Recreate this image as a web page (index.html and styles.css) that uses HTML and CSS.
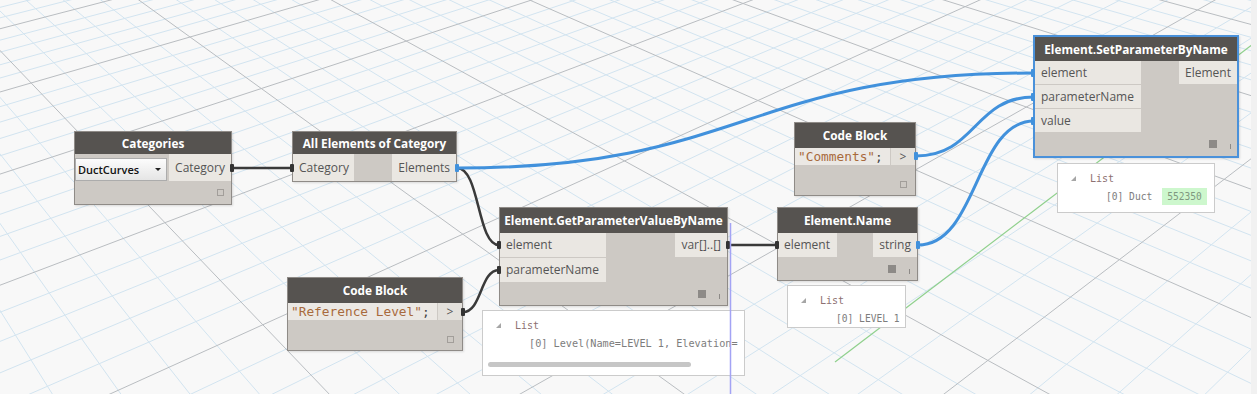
FILE: index.html
```html
<!DOCTYPE html>
<html lang="en">
<head>
    <meta charset="UTF-8">
    <meta name="viewport" content="width=device-width, initial-scale=1.0">
    <title>Dynamo - Set Comments</title>
    <link rel="stylesheet" href="styles.css">
</head>
<body>
    <div id="workspace">
        <svg id="grid" width="1257" height="394">
            <g id="minor-lines"></g>
            <g id="major-lines"></g>
            <line class="axis-y" x1="835" y1="362" x2="1257" y2="41"></line>
        </svg>

        <!-- Categories -->
        <div class="node n-categories">
            <div class="node-title short">Categories</div>
            <div class="node-body tall">
                <div class="dropdown"><span>DuctCurves</span><span class="caret"></span></div>
                <div class="outputs"><div class="port">Category</div></div>
            </div>
            <div class="node-foot"><span class="preview-off"></span></div>
        </div>

        <!-- All Elements of Category -->
        <div class="node n-all-elements">
            <div class="node-title short">All Elements of Category</div>
            <div class="node-body tall">
                <div class="inputs"><div class="port">Category</div></div>
                <div class="outputs"><div class="port">Elements</div></div>
            </div>
        </div>

        <!-- Code Block: Comments -->
        <div class="node n-code-comments">
            <div class="node-title">Code Block</div>
            <div class="code-row">
                <div class="code"><span class="str">"Comments"</span>;</div>
                <div class="code-out">&gt;</div>
            </div>
            <div class="node-foot code-foot"><span class="preview-off"></span></div>
        </div>

        <!-- Code Block: Reference Level -->
        <div class="node n-code-level">
            <div class="node-title">Code Block</div>
            <div class="code-row">
                <div class="code"><span class="str">"Reference Level"</span>;</div>
                <div class="code-out">&gt;</div>
            </div>
            <div class="node-foot code-foot"><span class="preview-off"></span></div>
        </div>

        <!-- Element.GetParameterValueByName -->
        <div class="node n-get-param">
            <div class="node-title">Element.GetParameterValueByName</div>
            <div class="node-body">
                <div class="inputs">
                    <div class="port">element</div>
                    <div class="port">parameterName</div>
                </div>
                <div class="outputs"><div class="port">var[]..[]</div></div>
            </div>
            <div class="node-foot"><span class="preview-on"></span><span class="lacing"></span></div>
        </div>
        <div class="preview p-get-param">
            <div class="preview-head"><span class="tri"></span><span class="list-label">List</span></div>
            <div class="preview-item">[0] Level(Name=LEVEL 1, Elevation=</div>
            <div class="scrollbar"></div>
        </div>

        <!-- Element.Name -->
        <div class="node n-element-name">
            <div class="node-title">Element.Name</div>
            <div class="node-body">
                <div class="inputs"><div class="port">element</div></div>
                <div class="outputs"><div class="port">string</div></div>
            </div>
            <div class="node-foot"><span class="preview-on"></span><span class="lacing"></span></div>
        </div>
        <div class="preview p-element-name">
            <div class="preview-head"><span class="tri"></span><span class="list-label">List</span></div>
            <div class="preview-item">[0] LEVEL 1</div>
        </div>

        <!-- Element.SetParameterByName (selected) -->
        <div class="node selected n-set-param">
            <div class="node-title">Element.SetParameterByName</div>
            <div class="node-body">
                <div class="inputs">
                    <div class="port">element</div>
                    <div class="port">parameterName</div>
                    <div class="port">value</div>
                </div>
                <div class="outputs"><div class="port">Element</div></div>
            </div>
            <div class="node-foot"><span class="preview-on"></span><span class="lacing"></span></div>
        </div>
        <div class="preview p-set-param">
            <div class="preview-head"><span class="tri"></span><span class="list-label">List</span></div>
            <div class="preview-item">[0] Duct<span class="value-new">552350</span></div>
        </div>

        <svg id="wires" width="1257" height="394">
            <path class="wire" d="M232,168 L292,168"></path>
            <path class="wire" d="M457,168 C480,168 477,245 499,245"></path>
            <path class="wire" d="M463,312 C482,312 480,270 499,270"></path>
            <path class="wire" d="M728,245 L777,245"></path>
            <path class="wire active" d="M457,168 C745,168 746,73 1034,73"></path>
            <path class="wire active" d="M916,156 C976,156 974,97 1034,97"></path>
            <path class="wire active" d="M918,245 C978,245 975,121 1034,121"></path>

            <rect class="pin" x="230" y="164" width="4" height="8" rx="1"></rect>
            <rect class="pin" x="290" y="164" width="4" height="8" rx="1"></rect>
            <rect class="pin" x="497" y="241" width="4" height="8" rx="1"></rect>
            <rect class="pin" x="497" y="266" width="4" height="8" rx="1"></rect>
            <rect class="pin" x="461" y="308" width="4" height="8" rx="1"></rect>
            <rect class="pin" x="726" y="241" width="4" height="8" rx="1"></rect>
            <rect class="pin" x="775" y="241" width="4" height="8" rx="1"></rect>
            <rect class="pin active" x="455" y="164" width="4" height="8" rx="1"></rect>
            <rect class="pin active" x="914" y="152" width="4" height="8" rx="1"></rect>
            <rect class="pin active" x="916" y="241" width="4" height="8" rx="1"></rect>
            <rect class="pin active" x="1031" y="69" width="4" height="8" rx="1"></rect>
            <rect class="pin active" x="1031" y="93" width="4" height="8" rx="1"></rect>
            <rect class="pin active" x="1031" y="117" width="4" height="8" rx="1"></rect>

            <line class="guide" x1="730.5" y1="223" x2="730.5" y2="394"></line>
        </svg>

        <div class="edge-strip"></div>
    </div>

    <script>
        // background grid plane seen in perspective
        const SVG_NS = 'http://www.w3.org/2000/svg';
        const minorGroup = document.getElementById('minor-lines');
        const majorGroup = document.getElementById('major-lines');

        const VA = [-470, -440];   // vanishing point of one line family
        const VB = [2150, -530];   // vanishing point of the other
        const O = [190, 37];       // a major grid crossing
        const a = 0.0975, b = 0.075;

        function project(u, v) {
            const w = 1 + a * u + b * v;
            return [
                (O[0] + a * u * VA[0] + b * v * VB[0]) / w,
                (O[1] + a * u * VA[1] + b * v * VB[1]) / w
            ];
        }

        function addLine(p, q, major) {
            const line = document.createElementNS(SVG_NS, 'line');
            line.setAttribute('x1', p[0].toFixed(1));
            line.setAttribute('y1', p[1].toFixed(1));
            line.setAttribute('x2', q[0].toFixed(1));
            line.setAttribute('y2', q[1].toFixed(1));
            (major ? majorGroup : minorGroup).appendChild(line);
        }

        for (let k = -80; k <= 80; k++) {
            const c = k / 5;
            const major = k % 5 === 0;

            const vStart = (0.04 - 1 - a * c) / b;
            if (vStart < 14) addLine(project(c, vStart), project(c, 14), major);

            const uStart = (0.04 - 1 - b * c) / a;
            if (uStart < 14) addLine(project(uStart, c), project(14, c), major);
        }
    </script>
</body>
</html>
```

FILE: styles.css
```css
body {
    margin: 0;
    background-color: #f8f8f8;
    font-family: "Open Sans", "Liberation Sans", sans-serif;
}

#workspace {
    position: relative;
    width: 1257px;
    height: 394px;
    overflow: hidden;
    background-color: #f8f8f8;
}

#grid,
#wires {
    position: absolute;
    left: 0;
    top: 0;
}

#wires {
    z-index: 2;
    pointer-events: none;
}

#minor-lines line {
    stroke: #d2e4f0;
    stroke-width: 1;
}

#major-lines line {
    stroke: #b9bdc1;
    stroke-width: 1;
}

.axis-y {
    stroke: #8fd08c;
    stroke-width: 1.2;
}

.edge-strip {
    position: absolute;
    right: 0;
    top: 0;
    width: 6px;
    height: 100%;
    background-color: #f1f1f1;
    z-index: 3;
}

/* nodes */

.node {
    position: absolute;
    z-index: 1;
    box-sizing: border-box;
    background-color: #cdc9c4;
    border: 1px solid #8f8b87;
    box-shadow: 1px 1px 2px rgba(0, 0, 0, 0.12);
}

.node.selected {
    border: 2px solid #4a91da;
}

.node-title {
    height: 25px;
    line-height: 25px;
    background-color: #565350;
    color: #fff;
    font-size: 11.8px;
    font-weight: 700;
    text-align: center;
    white-space: nowrap;
}

.node-title.short {
    height: 22px;
    line-height: 22px;
}

.node-body {
    display: flex;
    justify-content: space-between;
    align-items: flex-start;
}

.inputs,
.outputs {
    display: flex;
    flex-direction: column;
    gap: 1px;
}

.port {
    height: 24px;
    line-height: 24px;
    padding: 0 6px;
    background-color: #eae7e2;
    color: #555;
    font-size: 12px;
    white-space: nowrap;
}

.outputs .port {
    text-align: right;
}

.node-body.tall .port {
    height: 27px;
    line-height: 27px;
}

.node-foot {
    display: flex;
    justify-content: flex-end;
    align-items: center;
    height: 23px;
    padding-right: 7px;
}

.code-foot {
    height: 30px;
    align-items: flex-end;
    padding-bottom: 7px;
    padding-right: 8px;
    box-sizing: border-box;
}

.preview-off {
    width: 5px;
    height: 5px;
    border: 1px solid #a29e9a;
}

.preview-on {
    width: 8px;
    height: 8px;
    background-color: #8d8a87;
}

.lacing {
    width: 1px;
    height: 5px;
    margin: 5px 0 0 13px;
    background-color: #8d8a87;
}

/* Categories dropdown */

.dropdown {
    box-sizing: border-box;
    display: flex;
    align-items: center;
    justify-content: space-between;
    width: 92px;
    height: 23px;
    margin-top: 4px;
    padding: 0 5px 0 2px;
    background: linear-gradient(#fcfcfc, #e5e5e5);
    border: 1px solid #acacac;
    color: #111;
    font-size: 11px;
    font-weight: 600;
}

.caret {
    width: 0;
    height: 0;
    border-left: 3px solid transparent;
    border-right: 3px solid transparent;
    border-top: 3px solid #222;
}

/* code blocks */

.code-row {
    display: flex;
    height: 17px;
}

.code {
    flex: 1;
    padding-left: 3px;
    background-color: #ebe8e4;
    color: #444;
    font-family: "DejaVu Sans Mono", monospace;
    font-size: 12.8px;
    line-height: 17px;
    white-space: nowrap;
}

.code .str {
    color: #a86a3c;
}

.code-out {
    width: 24px;
    margin-left: 1px;
    background-color: #e3e0db;
    color: #555;
    font-size: 12px;
    line-height: 17px;
    text-align: center;
}

/* node positions on the canvas */

.n-categories { left: 74px; top: 131px; width: 158px; }
.n-all-elements { left: 292px; top: 131px; width: 165px; }
.n-all-elements .inputs { width: 61px; }
.n-code-comments { left: 794px; top: 122px; width: 122px; }
.n-code-level { left: 287px; top: 277px; width: 176px; }
.n-get-param { left: 499px; top: 207px; width: 229px; }
.n-get-param .inputs { width: 106px; }
.n-element-name { left: 777px; top: 207px; width: 141px; }
.n-element-name .inputs { width: 59px; }
.n-set-param { left: 1033px; top: 35px; width: 206px; }
.n-set-param .inputs { width: 106px; }
.n-set-param .node-title { height: 24px; line-height: 24px; }
.n-set-param .port { height: 23px; line-height: 23px; }
.n-set-param .node-foot { height: 24px; padding-right: 6px; }

/* watch previews */

.preview {
    position: absolute;
    z-index: 1;
    box-sizing: border-box;
    padding: 8px 0 0 13px;
    background-color: #fff;
    border: 1px solid #cbcbcb;
    color: #7d7d7d;
    font-family: "DejaVu Sans Mono", monospace;
    white-space: nowrap;
    overflow: hidden;
}

.preview-head {
    display: flex;
    align-items: center;
    height: 12px;
    margin-bottom: 4px;
    font-size: 10px;
}

.tri {
    width: 0;
    height: 0;
    margin-right: 14px;
    border-left: 5px solid transparent;
    border-bottom: 5px solid #a6a6a6;
}

.list-label {
    color: #8d7171;
}

.preview-item {
    display: flex;
    align-items: center;
    height: 17px;
    padding-left: 35px;
    font-size: 9.6px;
}

.value-new {
    margin-left: 10px;
    padding: 0 5px;
    line-height: 17px;
    background-color: #cdf7cd;
    color: #7f987f;
}

.scrollbar {
    width: 203px;
    height: 5px;
    margin: 10px 0 0 -8px;
    border-radius: 3px;
    background-color: #c6c6c6;
}

.p-set-param { left: 1057px; top: 163px; width: 158px; height: 50px; }
.p-element-name { left: 787px; top: 285px; width: 119px; height: 43px; }
.p-get-param { left: 482px; top: 310px; width: 263px; height: 66px; }
.p-get-param .preview-item { padding-left: 33px; font-size: 10.2px; }

/* wires */

.wire {
    fill: none;
    stroke: #3a3a3a;
    stroke-width: 2.5;
}

.wire.active {
    stroke: #4191dc;
    stroke-width: 3;
}

.pin {
    fill: #333;
}

.pin.active {
    fill: #4191dc;
}

.guide {
    stroke: #a3a3f4;
    stroke-width: 1.5;
}
```
